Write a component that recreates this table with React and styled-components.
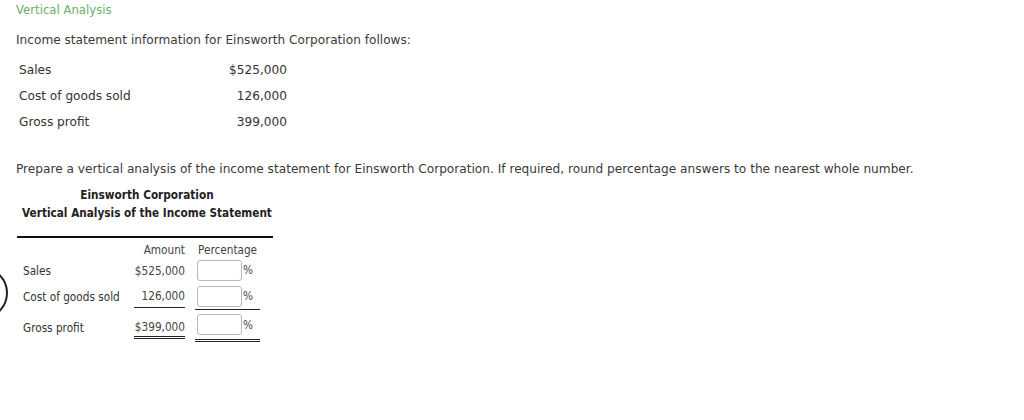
import React from "react";
import styled, { createGlobalStyle } from "styled-components";

const Global = createGlobalStyle`
  html, body { margin: 0; padding: 0; background: #fff; }
  body { font-family: "DejaVu Sans", Verdana, sans-serif; color: #333; }
`;

const Page = styled.div`
  position: relative;
  width: 1024px;
  height: 420px;
  overflow: hidden;
  padding: 4px 0 0 16px;
  box-sizing: border-box;
`;

const Title = styled.div`
  font-size: 11.7px;
  line-height: 13px;
  color: #6aae6c;
`;

const Para = styled.p`
  margin: ${p => p.$mt || 0}px 0 0 0;
  font-size: 12.15px;
  line-height: 15px;
  color: #3a3a3a;
  white-space: nowrap;
`;

const InfoTable = styled.div`
  margin-top: 9px;
  display: grid;
  grid-template-columns: 180px 88px;
  grid-auto-rows: 26px;
  padding-left: 3px;
  font-size: 12.15px;
  color: #333;
`;

const InfoCell = styled.div`
  display: flex;
  align-items: center;
  justify-content: ${p => (p.$right ? "flex-end" : "flex-start")};
`;

const Heading = styled.div`
  margin-top: 9px;
  width: 262px;
  display: flex;
  flex-direction: column;
  align-items: center;
  font-family: "DejaVu Sans Condensed", Tahoma, sans-serif;
  font-weight: bold;
  font-size: 11.7px;
  line-height: 18px;
  color: #222;
`;

const Rule = styled.div`
  margin: 14px 0 0 1px;
  width: 256px;
  height: 2px;
  background: #111;
`;

const Analysis = styled.div`
  margin-left: 1px;
  font-family: "DejaVu Sans Condensed", Tahoma, sans-serif;
  font-size: 11.7px;
  color: #333;
`;

const Row = styled.div`
  display: grid;
  grid-template-columns: 117px 51px 10px 65px;
  align-items: start;
  height: ${p => p.$h}px;
  padding-top: ${p => p.$pt || 0}px;
  box-sizing: border-box;
`;

const Label = styled.div`
  display: flex;
  align-items: center;
  height: ${p => p.$h}px;
  padding-top: ${p => p.$pt || 0}px;
  box-sizing: border-box;
  padding-left: 6px;
  color: #333;
`;

const Amount = styled.div`
  display: flex;
  align-items: center;
  justify-content: flex-end;
  box-sizing: border-box;
  height: ${p => p.$h}px;
  padding-top: ${p => p.$pt || 0}px;
  color: #444;
  ${p => p.$line === "single" && "border-bottom: 1px solid #222;"}
  ${p => p.$line === "double" && "border-bottom: 3px double #222;"}
`;

const Pct = styled.div`
  display: flex;
  align-items: center;
  box-sizing: border-box;
  height: ${p => p.$h}px;
  padding-left: 2px;
  color: #444;
  ${p => p.$line === "single" && "border-bottom: 1px solid #222;"}
  ${p => p.$line === "double" && "border-bottom: 3px double #222;"}
`;

const Head = styled.div`
  display: flex;
  align-items: center;
  justify-content: ${p => (p.$right ? "flex-end" : "flex-start")};
  height: 16px;
  padding-left: ${p => p.$pl || 0}px;
  color: #444;
`;

const Box = styled.input`
  width: 45px;
  height: 21px;
  box-sizing: border-box;
  border: 1px solid #b8b8b8;
  border-radius: 3px;
  background: #fff;
  margin: 0 1px 0 0;
  padding: 0;
  outline: none;
`;

const Arc = styled.svg`
  position: absolute;
  left: 0;
  top: 266px;
`;

const rows = [
  { label: "Sales", amount: "$525,000", h: 26, ah: 26, pt: 1, amt: null, pct: null },
  { label: "Cost of goods sold", amount: "126,000", h: 27, ah: 25, pt: 2, amt: "single", pct: "single" },
  { label: "Gross profit", amount: "$399,000", h: 32, ah: 29, pt: 7, amt: "double", pct: "double" },
];

export default function App() {
  return (
    <>
      <Global />
      <Page>
        <Title>Vertical Analysis</Title>
        <Para $mt={16}>Income statement information for Einsworth Corporation follows:</Para>
        <InfoTable>
          <InfoCell>Sales</InfoCell>
          <InfoCell $right>$525,000</InfoCell>
          <InfoCell>Cost of goods sold</InfoCell>
          <InfoCell $right>126,000</InfoCell>
          <InfoCell>Gross profit</InfoCell>
          <InfoCell $right>399,000</InfoCell>
        </InfoTable>
        <Para $mt={27}>
          Prepare a vertical analysis of the income statement for Einsworth Corporation. If required, round
          percentage answers to the nearest whole number.
        </Para>
        <Heading>
          <span>Einsworth Corporation</span>
          <span>Vertical Analysis of the Income Statement</span>
        </Heading>
        <Rule />
        <Analysis>
          <Row $h={19} $pt={4}>
            <span />
            <Head $right>Amount</Head>
            <span />
            <Head $pl={3}>Percentage</Head>
          </Row>
          {rows.map(r => (
            <Row key={r.label} $h={r.h}>
              <Label $h={r.ah} $pt={r.pt}>{r.label}</Label>
              <Amount $h={r.ah} $pt={r.pt} $line={r.amt}>{r.amount}</Amount>
              <span />
              <Pct $h={r.h} $line={r.pct}>
                <Box type="text" />%
              </Pct>
            </Row>
          ))}
        </Analysis>
        <Arc width="10" height="56" viewBox="0 0 10 56">
          <circle cx="-18" cy="27" r="25" fill="none" stroke="#222" strokeWidth="2" />
        </Arc>
      </Page>
    </>
  );
}
